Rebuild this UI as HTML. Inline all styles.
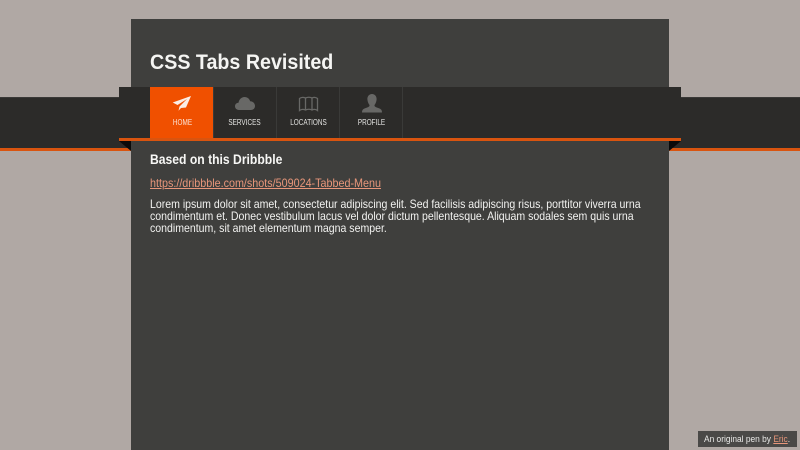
<!DOCTYPE html>
<html><head><meta charset="utf-8"><style>
html,body{margin:0;padding:0;width:800px;height:450px;overflow:hidden;background:#b0a8a4;font-family:"Liberation Sans",sans-serif}
div,a,svg{position:absolute;display:block}
.t{white-space:nowrap;color:#f2f2f0;transform-origin:0 50%}
.band{left:0;top:97px;width:800px;height:51px;background:#2c2b29;border-top:1px solid #3a3937;box-sizing:border-box}
.lab{top:118px;width:63px;text-align:center;font-size:7.8px;line-height:10px;color:#e4e4e2;white-space:nowrap;transform:scaleX(.82)}
.sep{top:87px;width:1px;height:51px;background:#3a3a38}
.p{font-size:11.8px;line-height:12px;transform:scaleX(.894)}
</style></head><body>
<div class="band"></div>
<div style="left:0;top:148px;width:800px;height:3px;background:#d9540f"></div>
<div style="left:131px;top:19px;width:538px;height:431px;background:#3f3f3d"></div>
<div class="t" style="left:150px;top:49px;font-size:21.5px;line-height:26px;font-weight:bold;color:#f5f5f3;transform:scaleX(.915)">CSS Tabs Revisited</div>
<div style="left:119px;top:87px;width:562px;height:51px;background:#2c2b29"></div>
<div style="left:119px;top:138px;width:562px;height:3px;background:#d9540f"></div>
<svg style="left:119px;top:141px" width="12" height="10"><path d="M0 0H12V10Z" fill="#0a0a0a"/></svg>
<svg style="left:669px;top:141px" width="12" height="10"><path d="M0 0H12L0 10Z" fill="#0a0a0a"/></svg>
<div style="left:150px;top:87px;width:63px;height:51px;background:#f05000"></div>
<div class="sep" style="left:213px"></div><div class="sep" style="left:276px"></div><div class="sep" style="left:339px"></div><div class="sep" style="left:402px"></div>
<svg style="left:170px;top:94px" width="24" height="20" viewBox="0 0 24 20"><path d="M21 2 2.700 8.500 7.500 11 17 5 9.500 12.500 8.500 16.800 11 14 16 13.500Z" fill="#fbeee6"/></svg>
<svg style="left:233px;top:94px" width="24" height="18" viewBox="0 0 24 18"><path d="M6 16C3.500 16 2 14.300 2 12.300 2 10.300 3.500 8.800 5.500 8.800 6 5.500 8.500 3 11.500 3 14.500 3 16.500 5 17.200 7.300 20 7.300 22 9.500 22 12 22 14.500 20 16 18 16Z" fill="#686866"/></svg>
<svg style="left:297px;top:94px" width="24" height="18" viewBox="0 0 24 18" fill="none" stroke="#686866" stroke-width="1.300"><path d="M2.500 4.500Q5 2.500 8.500 4 12 2.500 15 4 18 2.500 20.500 4.500V16.500Q18 14.500 15 16 12 14.500 8.500 16 5 14.500 2.500 16.500ZM8.500 4V16M15 4V16"/></svg>
<svg style="left:360px;top:92px" width="24" height="22" viewBox="0 0 24 22"><path d="M12 2C15 2 16.800 4.500 16.600 7.500 16.400 10 15.300 12 14.500 13 14.300 14.500 15.500 15 17.500 15.800 20.500 16.700 22 17.500 22 20.500H2C2 17.500 3.500 16.700 6.500 15.800 8.500 15 9.700 14.500 9.500 13 8.700 12 7.600 10 7.400 7.500 7.200 4.500 9 2 12 2Z" fill="#686866"/></svg>
<div class="lab" style="left:150.500px;color:#fbe3d6">HOME</div>
<div class="lab" style="left:213px">SERVICES</div>
<div class="lab" style="left:277px">LOCATIONS</div>
<div class="lab" style="left:339.500px">PROFILE</div>
<div class="t" style="left:150px;top:151px;font-size:14px;line-height:16px;font-weight:bold;color:#f7f7f5;transform:scaleX(.868)">Based on this Dribbble</div>
<a class="t" href="#" style="left:150px;top:176px;font-size:12px;line-height:14px;color:#e8967a;text-decoration:underline;transform:scaleX(.897)">https://dribbble.com/shots/509024-Tabbed-Menu</a>
<div class="t p" style="left:150px;top:198px">Lorem ipsum dolor sit amet, consectetur adipiscing elit. Sed facilisis adipiscing risus, porttitor viverra urna</div>
<div class="t p" style="left:150px;top:210px">condimentum et. Donec vestibulum lacus vel dolor dictum pellentesque. Aliquam sodales sem quis urna</div>
<div class="t p" style="left:150px;top:222px">condimentum, sit amet elementum magna semper.</div>
<div style="left:698px;top:431px;width:99px;height:16px;background:#4a4947"></div>
<div class="t" style="left:704px;top:433px;font-size:9.3px;line-height:12px;color:#e8e8e6;transform:scaleX(.9)">An original pen by <span style="color:#e8967a;text-decoration:underline">Eric</span>.</div>
</body></html>
